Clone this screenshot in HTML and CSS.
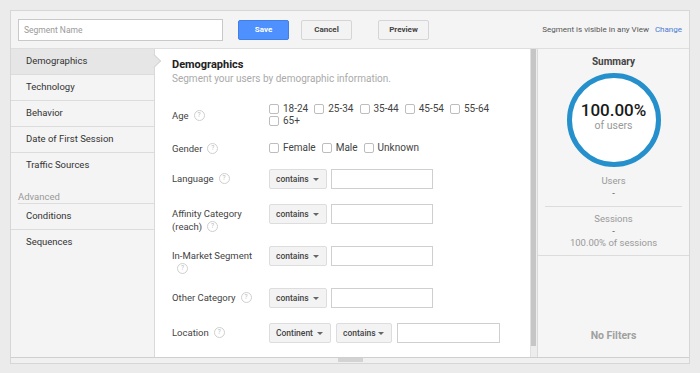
FILE: index.html
```html
<!DOCTYPE html>
<html>
<head>
<meta charset="utf-8">
<link rel="stylesheet" href="styles.css">
</head>
<body>
<div class="panel">
  <div class="toolbar">
    <input class="name-input" type="text" placeholder="Segment Name">
    <button class="btn btn-save">Save</button>
    <button class="btn btn-cancel">Cancel</button>
    <button class="btn btn-preview">Preview</button>
    <div class="visibility">Segment is visible in any View <span class="change">Change</span></div>
  </div>
  <div class="main">
    <div class="nav">
      <div class="nav-item selected">Demographics</div>
      <div class="nav-item">Technology</div>
      <div class="nav-item">Behavior</div>
      <div class="nav-item">Date of First Session</div>
      <div class="nav-item last">Traffic Sources</div>
      <div class="nav-label">Advanced</div>
      <div class="nav-item">Conditions</div>
      <div class="nav-item last">Sequences</div>
    </div>
    <div class="content">
      <div class="heading">Demographics</div>
      <div class="subtitle">Segment your users by demographic information.</div>

      <div class="row row-check">
        <div class="label">Age<span class="help">?</span></div>
        <div class="checks checks-age">
          <span class="check"><span class="box"></span>18-24</span>
          <span class="check"><span class="box"></span>25-34</span>
          <span class="check"><span class="box"></span>35-44</span>
          <span class="check"><span class="box"></span>45-54</span>
          <span class="check"><span class="box"></span>55-64</span>
          <span class="check"><span class="box"></span>65+</span>
        </div>
      </div>

      <div class="row row-check">
        <div class="label">Gender<span class="help">?</span></div>
        <div class="checks">
          <span class="check"><span class="box"></span>Female</span>
          <span class="check"><span class="box"></span>Male</span>
          <span class="check"><span class="box"></span>Unknown</span>
        </div>
      </div>

      <div class="row row-field">
        <div class="label">Language<span class="help">?</span></div>
        <div class="controls">
          <div class="sel">contains<span class="caret"></span></div>
          <div class="txt"></div>
        </div>
      </div>

      <div class="row row-field">
        <div class="label">Affinity Category (reach)<span class="help">?</span></div>
        <div class="controls">
          <div class="sel">contains<span class="caret"></span></div>
          <div class="txt"></div>
        </div>
      </div>

      <div class="row row-field">
        <div class="label">In-Market Segment<span class="help">?</span></div>
        <div class="controls">
          <div class="sel">contains<span class="caret"></span></div>
          <div class="txt"></div>
        </div>
      </div>

      <div class="row row-field">
        <div class="label">Other Category<span class="help">?</span></div>
        <div class="controls">
          <div class="sel">contains<span class="caret"></span></div>
          <div class="txt"></div>
        </div>
      </div>

      <div class="row row-field">
        <div class="label">Location<span class="help">?</span></div>
        <div class="controls controls-loc">
          <div class="sel sel-continent">Continent<span class="caret"></span></div>
          <div class="sel sel-small">contains<span class="caret"></span></div>
          <div class="txt txt-loc"></div>
        </div>
      </div>
    </div>
    <div class="scrollbar"><div class="thumb"></div></div>
    <div class="summary">
      <div class="sum-title">Summary</div>
      <div class="ring">
        <div class="ring-value">100.00%</div>
        <div class="ring-sub">of users</div>
      </div>
      <div class="stat stat-users">
        <div class="stat-name">Users</div>
        <div class="stat-dash">-</div>
      </div>
      <div class="stat stat-sessions">
        <div class="stat-name">Sessions</div>
        <div class="stat-dash">-</div>
        <div class="stat-name">100.00% of sessions</div>
      </div>
      <div class="nofilters">No Filters</div>
    </div>
  </div>
  <div class="footer"><div class="grip"></div></div>
</div>
</body>
</html>
```

FILE: styles.css
```css
html, body {
  margin: 0;
  padding: 0;
}
body {
  background: #ebebeb;
  font-family: Roboto, "Liberation Sans", Arial, sans-serif;
  width: 700px;
  height: 373px;
  overflow: hidden;
  padding-top: 10px;
  padding-left: 10px;
  box-sizing: border-box;
}
.panel {
  width: 680px;
  height: 354px;
  border: 1px solid #d6d6d6;
  background: #f4f4f4;
  box-sizing: border-box;
  display: flex;
  flex-direction: column;
}
.toolbar {
  height: 37px;
  flex: none;
  display: flex;
  align-items: center;
  padding: 0 7px;
}
.name-input {
  width: 205px;
  height: 22px;
  box-sizing: border-box;
  border: 1px solid #c9c9c9;
  background: #fff;
  padding: 0 5px;
  margin: 0;
  font-family: Roboto, "Liberation Sans", Arial, sans-serif;
  font-size: 8.5px;
  color: #333;
  outline: none;
}
.name-input::placeholder {
  color: #9a9a9a;
}
.btn {
  width: 51px;
  height: 20px;
  box-sizing: border-box;
  border-radius: 2px;
  font-family: Roboto, "Liberation Sans", Arial, sans-serif;
  font-size: 8px;
  font-weight: bold;
  padding: 0;
  margin: 0;
}
.btn-save {
  margin-left: 15px;
  background: #4d90fe;
  border: 1px solid #3f7fe6;
  color: #fff;
}
.btn-cancel {
  margin-left: 12px;
  background: #f3f3f3;
  border: 1px solid #d5d5d5;
  color: #444;
}
.btn-preview {
  margin-left: 26px;
  background: #f3f3f3;
  border: 1px solid #d5d5d5;
  color: #444;
}
.visibility {
  margin-left: auto;
  font-size: 8px;
  color: #555;
}
.change {
  color: #4a7bd2;
  margin-left: 4px;
}
.main {
  height: 309px;
  flex: none;
  display: flex;
  border-top: 1px solid #dedede;
  box-sizing: border-box;
}
.nav {
  width: 144px;
  flex: none;
  border-right: 1px solid #d9d9d9;
  box-sizing: border-box;
  background: #f4f4f4;
}
.nav-item {
  height: 26px;
  box-sizing: border-box;
  border-bottom: 1px solid #dcdcdc;
  padding-left: 15px;
  line-height: 24px;
  font-size: 9.5px;
  color: #333;
}
.nav-item.last {
  border-bottom: none;
}
.nav-item.selected {
  background: #e6e6e6;
  position: relative;
}
.nav-item.selected::after {
  content: "";
  position: absolute;
  right: -5px;
  top: 7px;
  width: 9px;
  height: 9px;
  background: #e6e6e6;
  border-top: 1px solid #d6d6d6;
  border-right: 1px solid #d6d6d6;
  transform: rotate(45deg);
}
.nav-label {
  margin-left: 7px;
  padding-top: 12px;
  line-height: 12px;
  font-size: 9.5px;
  color: #999;
  border-bottom: 1px solid #dcdcdc;
}
.content {
  width: 375px;
  flex: none;
  background: #fff;
  box-sizing: border-box;
  padding: 9px 17px 0;
}
.heading {
  font-size: 11px;
  font-weight: bold;
  color: #222;
  line-height: 14px;
}
.subtitle {
  font-size: 10px;
  color: #aaa;
  line-height: 14px;
  margin-bottom: 17px;
}
.row {
  display: flex;
}
.label {
  width: 88px;
  margin-right: 9px;
  flex: none;
  font-size: 9.5px;
  color: #444;
  line-height: 13px;
}
.help {
  display: inline-block;
  width: 9px;
  height: 9px;
  border: 1px solid #cfcfcf;
  border-radius: 50%;
  font-size: 6.5px;
  line-height: 9px;
  text-align: center;
  color: #bbb;
  margin-left: 5px;
  vertical-align: top;
  margin-top: 1px;
}
.row-check {
  align-items: center;
  margin-bottom: 14px;
}
.row-check .label {
  padding-top: 1px;
}
.checks {
  display: flex;
  flex-wrap: wrap;
  column-gap: 6px;
  line-height: 12px;
  font-size: 10px;
  color: #444;
}
.checks-age {
  width: 230px;
}
.check {
  display: flex;
  align-items: center;
  gap: 4px;
}
.box {
  width: 8px;
  height: 8px;
  border: 1px solid #bdbdbd;
  border-radius: 2px;
  background: #fff;
}
.row-field {
  align-items: flex-start;
  min-height: 22px;
  margin-bottom: 13px;
}
.row-field .label {
  padding-top: 3px;
}
.controls {
  display: flex;
  gap: 4px;
}
.controls-loc {
  gap: 5px;
}
.sel {
  width: 58px;
  height: 20px;
  box-sizing: border-box;
  border: 1px solid #dddddd;
  border-radius: 2px;
  background: #f3f3f3;
  display: flex;
  align-items: center;
  justify-content: space-between;
  padding: 0 7px 0 6px;
  font-size: 8.5px;
  color: #444;
  font-weight: 500;
}
.sel-continent {
  width: 62px;
}
.sel-small {
  width: 56px;
}
.caret {
  width: 0;
  height: 0;
  border-left: 3px solid transparent;
  border-right: 3px solid transparent;
  border-top: 3px solid #666;
  margin-top: 1px;
}
.txt {
  width: 102px;
  height: 20px;
  box-sizing: border-box;
  border: 1px solid #cfcfcf;
  background: #fff;
}
.txt-loc {
  width: 103px;
}
.scrollbar {
  width: 7px;
  flex: none;
  background: #ededed;
  border-left: 1px solid #e0e0e0;
  box-sizing: border-box;
}
.thumb {
  width: 5px;
  height: 297px;
  background: #c6c6c6;
  margin-left: 0;
}
.summary {
  flex: 1;
  border-left: 1px solid #dadada;
  background: #f5f5f5;
  display: flex;
  flex-direction: column;
  align-items: stretch;
  padding-top: 7px;
  box-sizing: border-box;
}
.sum-title {
  text-align: center;
  font-size: 10px;
  font-weight: bold;
  color: #444;
  line-height: 12px;
}
.ring {
  width: 94px;
  height: 94px;
  box-sizing: border-box;
  border: 5px solid #2590cb;
  border-radius: 50%;
  background: #fff;
  margin: 5px auto 0;
  display: flex;
  flex-direction: column;
  align-items: center;
  justify-content: center;
  padding-bottom: 6px;
}
.ring-value {
  font-size: 17px;
  color: #1a1a1a;
  line-height: 18px;
  font-weight: 500;
}
.ring-sub {
  font-size: 10.5px;
  color: #999;
  line-height: 14px;
}
.stat {
  text-align: center;
  font-size: 9.5px;
  line-height: 12px;
}
.stat-name {
  color: #999;
}
.stat-dash {
  color: #555;
}
.stat-users {
  margin: 8px 7px 0;
  padding-bottom: 7px;
  border-bottom: 1px solid #dcdcdc;
}
.stat-sessions {
  padding-top: 6px;
  padding-bottom: 6px;
  border-bottom: 1px solid #dcdcdc;
}
.nofilters {
  flex: 1;
  display: flex;
  align-items: flex-end;
  justify-content: center;
  padding-bottom: 14px;
  font-size: 10.5px;
  font-weight: bold;
  color: #a0a0a0;
  line-height: 14px;
}
.footer {
  flex: 1;
  border-top: 1px solid #cfcfcf;
  background: #f0f0f0;
  display: flex;
  justify-content: center;
}
.grip {
  width: 25px;
  height: 4px;
  background: #d3d3d3;
}
```
